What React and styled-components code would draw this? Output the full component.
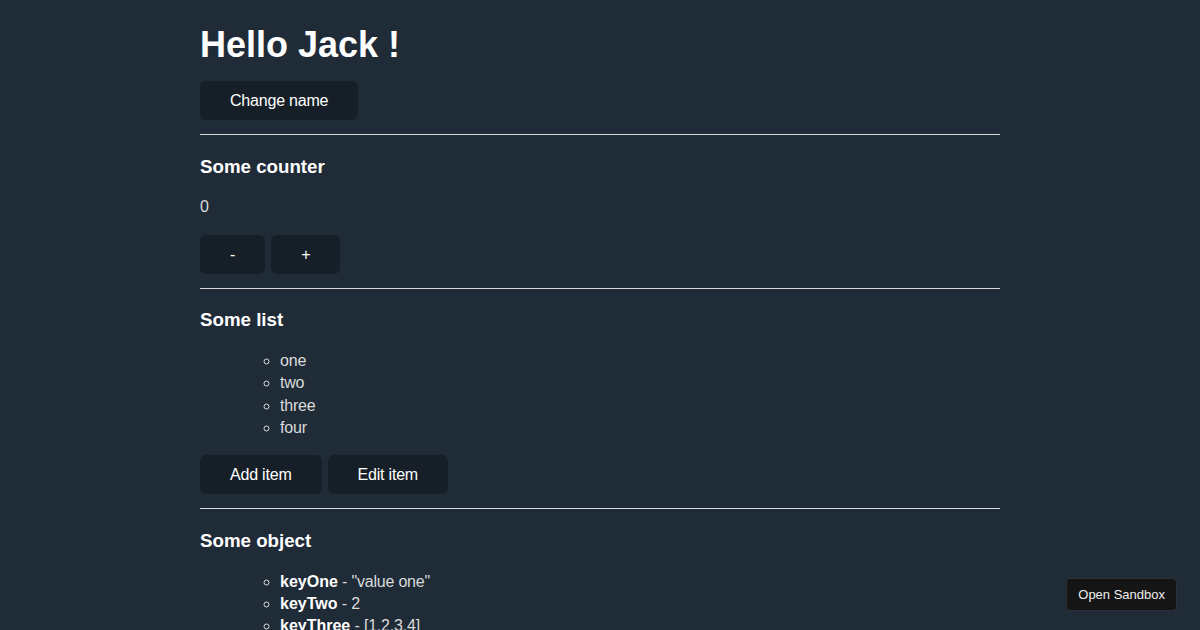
import React, { useState } from 'react'
import styled, { createGlobalStyle } from 'styled-components'

const GlobalStyle = createGlobalStyle`
    html, body {
        margin : 0;
        padding : 0;
        background-color : #202b38;
    }
    body {
        font-family : "Liberation Sans", Arial, sans-serif;
        font-size : 16px;
        line-height : 1.4;
        color : #dbdbdb;
    }
`

const Page = styled.main`
    max-width : 800px;
    margin : 0 auto;
    padding : 21px 0 40px;
`

const Title = styled.h1`
    font-size : 36px;
    line-height : 48px;
    margin : 0 0 12px;
    color : #fff;
`

const Heading = styled.h3`
    font-size : 1.17em;
    line-height : 1.4;
    margin : ${p => p.top || 18}px 0 16px;
    color : #fff;
`

const Divider = styled.hr`
    border : 0;
    border-top : 1px solid #dbdbdb;
    margin : 8px 0 0;
    height : 0;
`

const Value = styled.p`
    margin : 0 0 16px;
`

const ButtonRow = styled.div`
    display : flex;
    gap : 6px;
    padding-bottom : 6px;
`

const Button = styled.button`
    font-family : inherit;
    font-size : 16px;
    line-height : 19px;
    letter-spacing : -0.2px;
    padding : 10px 30px;
    border : 0;
    border-radius : 6px;
    background-color : #161f27;
    color : #fff;
    cursor : pointer;
`

const List = styled.ul`
    margin : ${p => p.top || 16}px 0 16px;
    padding-left : 80px;
    list-style-type : circle;
    li {
        color : #dbdbdb;
        letter-spacing : -0.2px;
    }
    b {
        color : #fff;
        font-weight : 700;
        letter-spacing : 0;
    }
`

const SandboxButton = styled.button`
    position : fixed;
    right : 23px;
    bottom : 19px;
    height : 33px;
    padding : 0 11px;
    font-family : "Liberation Sans", Arial, sans-serif;
    font-size : 13px;
    color : #eee;
    background-color : #151515;
    border : 1px solid #2d3138;
    border-radius : 4px;
`

const someObject = {
    keyOne : '"value one"',
    keyTwo : '2',
    keyThree : '[1,2,3,4]'
}

export default function App () {
    const [name, setName] = useState('Jack')
    const [count, setCount] = useState(0)
    const [items, setItems] = useState(['one', 'two', 'three', 'four'])

    return (
        <Page>
            <GlobalStyle />
            <Title>Hello {name} !</Title>
            <ButtonRow>
                <Button onClick={() => setName(name === 'Jack' ? 'Jill' : 'Jack')}>Change name</Button>
            </ButtonRow>
            <Divider />

            <Heading top={19}>Some counter</Heading>
            <Value>{count}</Value>
            <ButtonRow>
                <Button onClick={() => setCount(count - 1)}>-</Button>
                <Button onClick={() => setCount(count + 1)}>+</Button>
            </ButtonRow>
            <Divider />

            <Heading>Some list</Heading>
            <List top={17}>
                {items.map((item, i) => <li key={i}>{item}</li>)}
            </List>
            <ButtonRow>
                <Button onClick={() => setItems([...items, 'five'])}>Add item</Button>
                <Button onClick={() => setItems(items.map((x, i) => i === 0 ? 'uno' : x))}>Edit item</Button>
            </ButtonRow>
            <Divider />

            <Heading top={19}>Some object</Heading>
            <List>
                {Object.keys(someObject).map(key => (
                    <li key={key}><b>{key}</b> - {someObject[key]}</li>
                ))}
            </List>

            <SandboxButton>Open Sandbox</SandboxButton>
        </Page>
    )
}
